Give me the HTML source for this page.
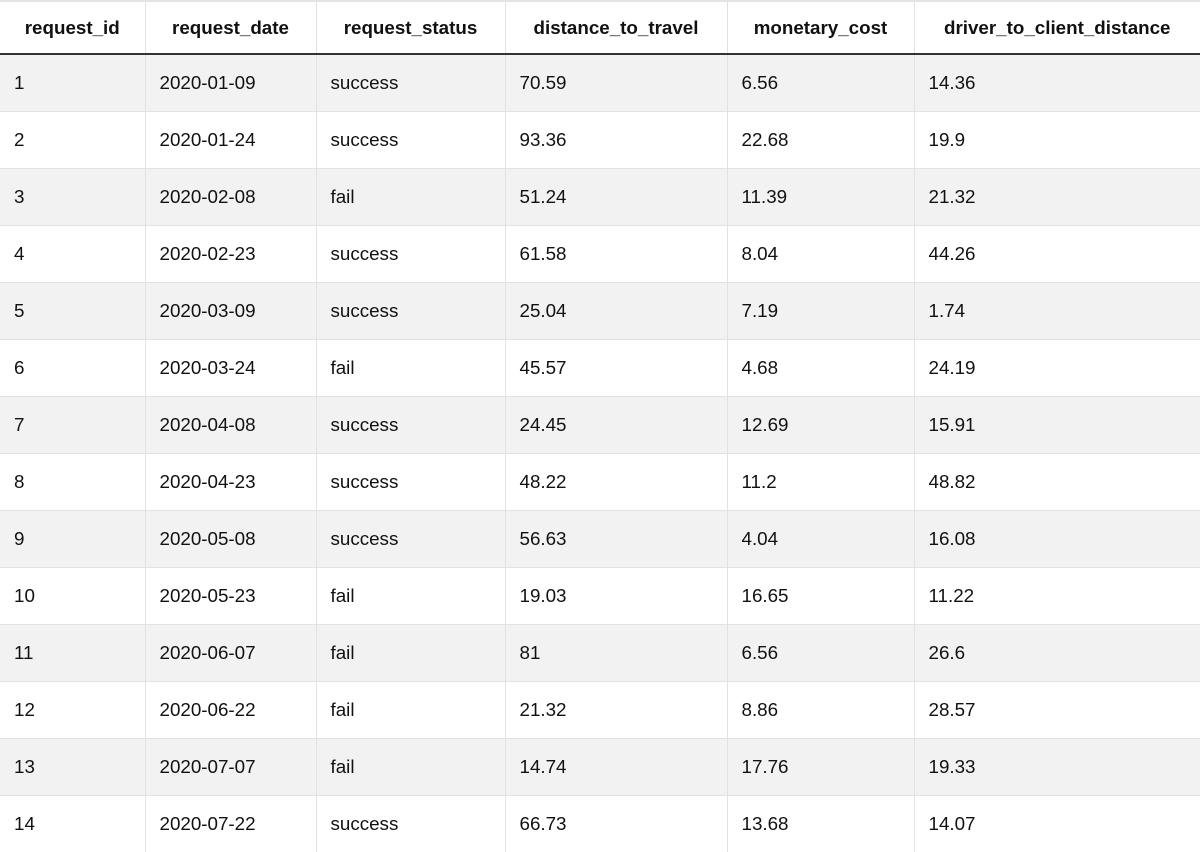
<!DOCTYPE html>
<html><head><meta charset="utf-8"><style>
html,body{margin:0;padding:0;background:#fff;width:1200px;height:852px;overflow:hidden}
table{border-collapse:collapse;table-layout:fixed;width:1200px;font-family:"Liberation Sans",Arial,sans-serif;font-size:18.8px;color:#111;border-top:2px solid #e4e4e4}
th{height:51px;font-weight:bold;text-align:center;border-bottom:2px solid #333;border-left:1px solid #e2e2e2;padding:0}
td{height:56px;border-bottom:1px solid #e2e2e2;border-left:1px solid #e2e2e2;padding:0 0 0 14px}
th:first-child,td:first-child{border-left:none}
tbody tr:nth-child(odd) td{background:#f2f2f2}
</style></head><body>
<table>
<colgroup><col style="width:145px"><col style="width:171px"><col style="width:189px"><col style="width:222px"><col style="width:187px"><col style="width:286px"></colgroup>
<thead><tr><th>request_id</th><th>request_date</th><th>request_status</th><th>distance_to_travel</th><th>monetary_cost</th><th>driver_to_client_distance</th></tr></thead>
<tbody>
<tr><td>1</td><td>2020-01-09</td><td>success</td><td>70.59</td><td>6.56</td><td>14.36</td></tr>
<tr><td>2</td><td>2020-01-24</td><td>success</td><td>93.36</td><td>22.68</td><td>19.9</td></tr>
<tr><td>3</td><td>2020-02-08</td><td>fail</td><td>51.24</td><td>11.39</td><td>21.32</td></tr>
<tr><td>4</td><td>2020-02-23</td><td>success</td><td>61.58</td><td>8.04</td><td>44.26</td></tr>
<tr><td>5</td><td>2020-03-09</td><td>success</td><td>25.04</td><td>7.19</td><td>1.74</td></tr>
<tr><td>6</td><td>2020-03-24</td><td>fail</td><td>45.57</td><td>4.68</td><td>24.19</td></tr>
<tr><td>7</td><td>2020-04-08</td><td>success</td><td>24.45</td><td>12.69</td><td>15.91</td></tr>
<tr><td>8</td><td>2020-04-23</td><td>success</td><td>48.22</td><td>11.2</td><td>48.82</td></tr>
<tr><td>9</td><td>2020-05-08</td><td>success</td><td>56.63</td><td>4.04</td><td>16.08</td></tr>
<tr><td>10</td><td>2020-05-23</td><td>fail</td><td>19.03</td><td>16.65</td><td>11.22</td></tr>
<tr><td>11</td><td>2020-06-07</td><td>fail</td><td>81</td><td>6.56</td><td>26.6</td></tr>
<tr><td>12</td><td>2020-06-22</td><td>fail</td><td>21.32</td><td>8.86</td><td>28.57</td></tr>
<tr><td>13</td><td>2020-07-07</td><td>fail</td><td>14.74</td><td>17.76</td><td>19.33</td></tr>
<tr><td>14</td><td>2020-07-22</td><td>success</td><td>66.73</td><td>13.68</td><td>14.07</td></tr>
</tbody></table>
</body></html>
